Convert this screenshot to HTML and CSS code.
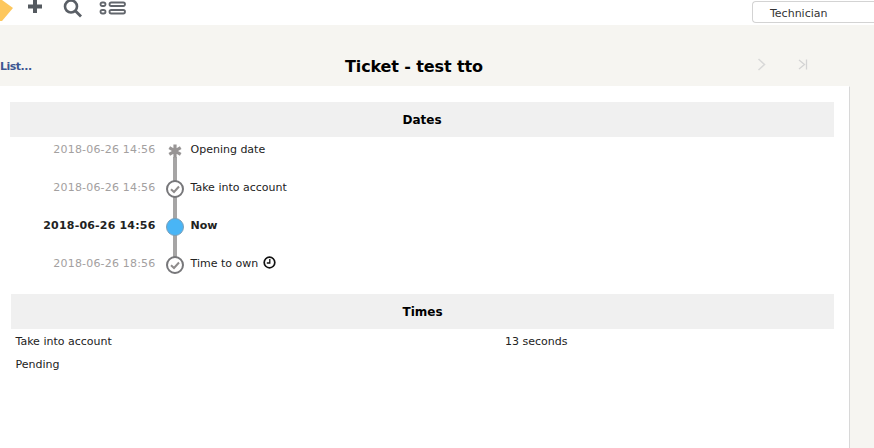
FILE: index.html
```html
<!DOCTYPE html>
<html lang="en">
<head>
<meta charset="utf-8">
<title>Ticket - test tto</title>
<link rel="stylesheet" href="styles.css">
</head>
<body>
<header class="topbar">
  <div class="tools">
    <svg class="logo" width="13" height="22" viewBox="0 0 13 22"><path d="M0 0H2L13 8L2 21H0Z" fill="#fdc75d"/></svg>
    <svg class="tool plus" width="16" height="16" viewBox="0 0 16 16"><path d="M8 1V14M1 7.5H15" stroke="#555a60" stroke-width="4" fill="none"/></svg>
    <svg class="tool search" width="20" height="18" viewBox="0 0 20 18"><circle cx="8" cy="6.500" r="6" stroke="#5a5f66" stroke-width="2.600" fill="none"/><path d="M12.500 11L18 16.500" stroke="#5a5f66" stroke-width="2.800" fill="none"/></svg>
    <svg class="tool list" width="27" height="14" viewBox="0 0 27 14"><g stroke="#62666c" stroke-width="1.800" fill="none"><rect x="1.500" y="1.500" width="5" height="3.500" rx="1.700"/><rect x="1.500" y="9" width="5" height="3.500" rx="1.700"/><rect x="10.500" y="1.500" width="15.500" height="3.500" rx="1.700"/><rect x="10.500" y="9" width="15.500" height="3.500" rx="1.700"/></g></svg>
  </div>
  <div class="profile">Technician</div>
</header>
<nav class="titlebar">
  <a class="back" href="#">List...</a>
  <h1 class="title">Ticket - test tto</h1>
  <div class="pager">
    <svg width="9" height="13" viewBox="0 0 9 13"><path d="M1.500 1L7.500 6.500L1.500 12" stroke="#d8d8d8" stroke-width="1.500" fill="none"/></svg>
    <svg width="10" height="11" viewBox="0 0 10 11"><path d="M1 1L6.500 5.500L1 10M8.500 .500V10.500" stroke="#d4d4d4" stroke-width="1.300" fill="none"/></svg>
  </div>
</nav>
<main class="panel">
  <section class="block">
    <h2 class="block-head">Dates</h2>
    <ul class="timeline">
      <li class="event">
        <time class="when">2018-06-26 14:56</time>
        <span class="mark"><svg width="14" height="14" viewBox="0 0 14 14"><path d="M7 .500V13.500M1.300 3.700L12.700 10.300M12.700 3.700L1.300 10.300" stroke="#989595" stroke-width="3.200" fill="none"/></svg></span>
        <span class="what">Opening date</span>
      </li>
      <li class="event">
        <time class="when">2018-06-26 14:56</time>
        <span class="mark"><svg width="18" height="18" viewBox="0 0 18 18"><circle cx="9" cy="9" r="8" fill="#fff" stroke="#77777a" stroke-width="2"/><path d="M5 9.200L8 12L13 6.500" stroke="#8f8c8c" stroke-width="2" fill="none"/></svg></span>
        <span class="what">Take into account</span>
      </li>
      <li class="event now">
        <time class="when">2018-06-26 14:56</time>
        <span class="mark"><svg width="18" height="18" viewBox="0 0 18 18"><circle cx="9" cy="9" r="8.500" fill="#49b5f6" stroke="#7b9fb8" stroke-width="1"/></svg></span>
        <span class="what">Now</span>
      </li>
      <li class="event">
        <time class="when">2018-06-26 18:56</time>
        <span class="mark"><svg width="18" height="18" viewBox="0 0 18 18"><circle cx="9" cy="9" r="8" fill="#fff" stroke="#77777a" stroke-width="2"/><path d="M5 9.200L8 12L13 6.500" stroke="#8f8c8c" stroke-width="2" fill="none"/></svg></span>
        <span class="what">Time to own <svg class="clock" width="13" height="13" viewBox="0 0 13 13"><circle cx="6.500" cy="6.500" r="5.300" fill="none" stroke="#111" stroke-width="1.700"/><path d="M6.800 3V7H3.800" fill="none" stroke="#111" stroke-width="1.300"/></svg></span>
      </li>
    </ul>
  </section>
  <section class="block times">
    <h2 class="block-head">Times</h2>
    <div class="time-row"><span class="time-label">Take into account</span><span>13 seconds</span></div>
    <div class="time-row"><span class="time-label">Pending</span></div>
  </section>
</main>
</body>
</html>
```
FILE: styles.css
```css
* { box-sizing: border-box; }
html, body { margin: 0; height: 100%; overflow: hidden; }
body {
  background: #f6f5f1;
  color: #222;
  font-family: "DejaVu Sans", sans-serif;
  font-size: 11px;
  display: flex;
  flex-direction: column;
}
.topbar {
  height: 25px;
  flex: none;
  background: #fff;
  display: flex;
  justify-content: space-between;
}
.tools { display: flex; align-items: flex-start; }
.logo { display: block; margin-right: 14px; }
.tool { display: block; flex: none; }
.plus { margin-right: 20px; margin-top: -1px; }
.search { margin-right: 16px; margin-top: 0; }
.list { margin-top: 1px; }
.profile {
  width: 122px;
  height: 22px;
  margin-top: 1px;
  padding: 5px 0 0 17px;
  line-height: 14px;
  background: #fff;
  border: 1px solid #d3d3d3;
  border-right: 0;
  border-radius: 4px 0 0 4px;
  color: #333;
}
.titlebar {
  height: 61px;
  flex: none;
  display: grid;
  grid-template-columns: 345px auto 1fr;
  align-items: start;
}
.back {
  padding-top: 35px;
  line-height: 14px;
  font-size: 11px;
  letter-spacing: -.5px;
  font-weight: bold;
  color: #3d5591;
  text-decoration: none;
}
.title {
  margin: 0;
  padding-top: 32px;
  font-size: 16px;
  line-height: 20px;
  letter-spacing: -.12px;
  font-weight: bold;
  color: #000;
}
.pager {
  display: flex;
  align-items: center;
  gap: 32px;
  padding: 33px 0 0 274px;
}
.panel {
  width: 850px;
  flex: 1;
  background: #fff;
  border-right: 1px solid #d8d8d8;
  border-top: 1px solid #fff;
  padding: 15px 15px 0 10px;
}
.block-head {
  margin: 0;
  height: 35px;
  background: #f0f0f0;
  font-size: 12px;
  line-height: 37px;
  font-weight: bold;
  text-align: center;
  color: #000;
}
.timeline {
  list-style: none;
  margin: 0;
  padding: 0;
  width: 400px;
}
.event {
  height: 38px;
  display: grid;
  grid-template-columns: 145.500px 35px 1fr;
  position: relative;
  padding-top: 6px;
  line-height: 14px;
}
.event:not(:last-child)::after {
  content: "";
  position: absolute;
  left: 163px;
  top: 20px;
  width: 4px;
  height: 38px;
  background: #a6a5a5;
}
.when { text-align: right; color: #a3a0a0; white-space: nowrap; letter-spacing: .19px; }
.mark {
  height: 20px;
  width: 38px;
  display: flex;
  justify-content: center;
  align-items: center;
  position: relative;
  z-index: 1;
  margin-top: -2px;
}
.what { color: #222; }
.clock { vertical-align: 0; margin: -2px 0 -2px 1px; }
.now .when, .now .what { font-weight: bold; color: #222; }
.times { margin-top: 5px; margin-left: 1px; }
.time-row {
  display: grid;
  grid-template-columns: 489.500px 1fr;
  height: 23px;
  padding: 6px 0 0 4.500px;
  line-height: 14px;
}
```
